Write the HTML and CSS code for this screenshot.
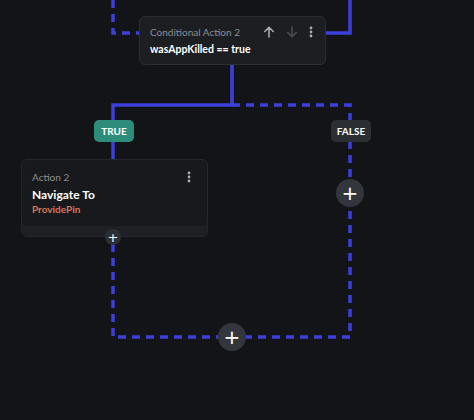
FILE: index.html
```html
<!DOCTYPE html>
<html lang="en">
<head>
  <meta charset="UTF-8">
  <title>Action Flow</title>
  <link rel="stylesheet" href="styles.css">
</head>
<body>
  <div class="canvas">
    <!-- connectors -->
    <svg class="wires" width="474" height="420" viewBox="0 0 474 420">
      <path class="dashed" d="M113 0 V33 H140" />
      <path class="solid" d="M326 33 H350 V0" />
      <path class="solid" d="M232 64 V105 H113 V160" />
      <path class="dashed" d="M232 105 H350 V337 H113 V244" />
    </svg>

    <div class="node cond-node">
      <div class="node-head">
        <span class="node-label">Conditional Action 2</span>
        <div class="node-tools">
          <svg class="tool" width="12" height="12" viewBox="0 0 12 12"><path d="M6 11 V1.5 M1.8 5.5 L6 1.3 L10.2 5.5" /></svg>
          <svg class="tool dim" width="12" height="12" viewBox="0 0 12 12"><path d="M6 1 V10.5 M1.8 6.5 L6 10.7 L10.2 6.5" /></svg>
          <svg class="dots" width="4" height="12" viewBox="0 0 4 12"><circle cx="2" cy="2" r="1.4" /><circle cx="2" cy="6" r="1.4" /><circle cx="2" cy="10" r="1.4" /></svg>
        </div>
      </div>
      <div class="node-expr">wasAppKilled == true</div>
    </div>

    <div class="badge badge-true">TRUE</div>
    <div class="badge badge-false">FALSE</div>

    <div class="node action-node">
      <div class="node-head">
        <span class="node-label">Action 2</span>
        <svg class="dots" width="4" height="12" viewBox="0 0 4 12"><circle cx="2" cy="2" r="1.4" /><circle cx="2" cy="6" r="1.4" /><circle cx="2" cy="10" r="1.4" /></svg>
      </div>
      <div class="action-title">Navigate To</div>
      <div class="action-target">ProvidePin</div>
    </div>

    <button class="add add-small">+</button>
    <button class="add add-false">+</button>
    <button class="add add-bottom">+</button>
  </div>
</body>
</html>
```

FILE: styles.css
```css
* {
  margin: 0;
  padding: 0;
  box-sizing: border-box;
}

body {
  background: #131418;
  font-family: Lato, 'Open Sans', sans-serif;
  color: #fff;
  overflow: hidden;
}

.canvas {
  position: relative;
  width: 474px;
  height: 420px;
}

.wires {
  position: absolute;
  left: 0;
  top: 0;
}

.wires path {
  fill: none;
  stroke: #3c3fdc;
  stroke-width: 3.5;
}

.wires .dashed {
  stroke-dasharray: 8 6;
}

/* nodes */
.node {
  position: absolute;
  background: #1c1e22;
  border: 1px solid #2a2d32;
  border-radius: 6px;
}

.node-head {
  display: flex;
  justify-content: space-between;
  align-items: center;
}

.node-label {
  font-size: 10px;
  color: #8b8e95;
}

.cond-node {
  left: 139px;
  top: 16px;
  width: 187px;
  height: 49px;
  padding: 9px 12px 0 10px;
}

.node-tools {
  display: flex;
  align-items: center;
  gap: 11px;
}

.tool path {
  fill: none;
  stroke: #a8abb1;
  stroke-width: 1.6;
  stroke-linecap: round;
  stroke-linejoin: round;
}

.tool.dim path {
  stroke: #4a4d53;
}

.dots circle {
  fill: #a8abb1;
}

.node-expr {
  margin-top: 5px;
  font-size: 10.5px;
  font-weight: 700;
}

.action-node {
  left: 21px;
  top: 159px;
  width: 187px;
  height: 78px;
  padding: 11px 16px 0 10px;
  background: #17191c;
  border-color: #24272b;
  box-shadow: inset 0 -10px 0 #1e2024;
}

.action-title {
  margin-top: 4px;
  font-size: 12px;
  font-weight: 700;
}

.action-target {
  margin-top: 1px;
  font-size: 10px;
  font-weight: 700;
  color: #d9775a;
}

/* branch badges */
.badge {
  position: absolute;
  top: 120px;
  height: 22px;
  border-radius: 5px;
  font-size: 10px;
  font-weight: 700;
  display: flex;
  align-items: center;
  justify-content: center;
}

.badge-true {
  left: 94px;
  width: 40px;
  background: #2e8c7b;
}

.badge-false {
  left: 331px;
  width: 40px;
  background: #2b2e33;
}

/* add buttons */
.add {
  position: absolute;
  border: none;
  border-radius: 50%;
  background: #33363c;
  color: #fff;
  font-family: 'DejaVu Sans', sans-serif;
  display: flex;
  align-items: center;
  justify-content: center;
  line-height: 1;
}

.add-small {
  left: 105px;
  top: 229px;
  width: 16px;
  height: 16px;
  font-size: 13px;
  background: #2c2f34;
}

.add-false {
  left: 336px;
  top: 179px;
  width: 28px;
  height: 28px;
  font-size: 20px;
}

.add-bottom {
  left: 218px;
  top: 323px;
  width: 28px;
  height: 28px;
  font-size: 20px;
}
```
